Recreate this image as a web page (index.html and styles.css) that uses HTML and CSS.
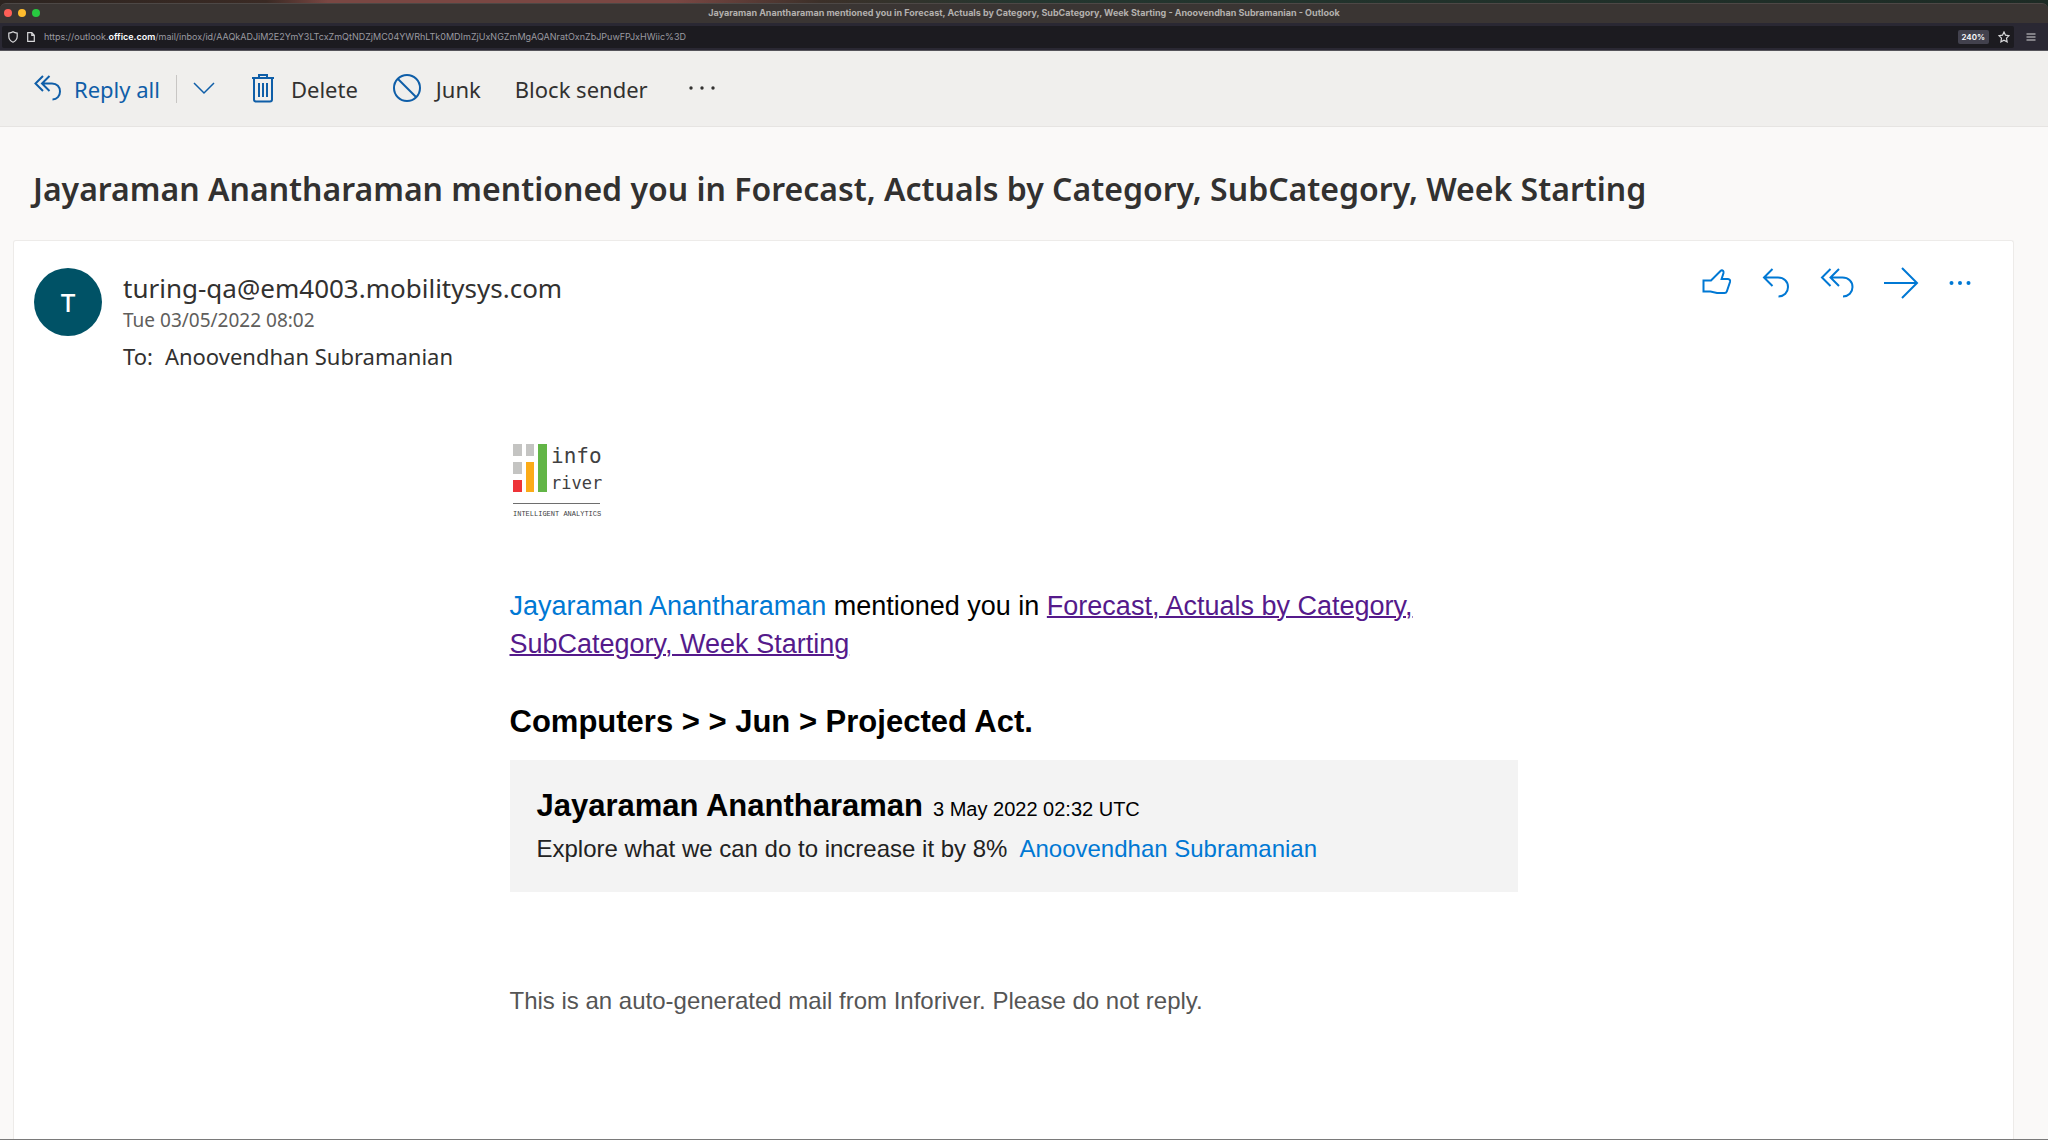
FILE: index.html
```html
<!DOCTYPE html>
<html lang="en">
<head>
    <meta charset="UTF-8">
    <meta name="viewport" content="width=device-width, initial-scale=1.0">
    <title>Jayaraman Anantharaman mentioned you in Forecast - Outlook</title>
    <link rel="stylesheet" href="styles.css">
</head>
<body>

<div class="window">
    <div class="titlebar">
        <div class="lights">
            <button class="light red" aria-label="Close"></button>
            <button class="light yellow" aria-label="Minimize"></button>
            <button class="light green" aria-label="Zoom"></button>
        </div>
        <div class="window-title">Jayaraman Anantharaman mentioned you in Forecast, Actuals by Category, SubCategory, Week Starting - Anoovendhan Subramanian - Outlook</div>
    </div>

    <div class="urlbar">
        <div class="url-field">
            <svg width="10" height="12" viewBox="0 0 10 12"><path d="M5 .8C6.200 1.600 7.600 2 9.200 2.100V5.500C9.200 8.200 7.500 10 5 11.200C2.500 10 .8 8.200 .8 5.500V2.100C2.400 2 3.800 1.600 5 .8Z"/></svg>
            <svg width="8" height="10" viewBox="0 0 8 10"><path d="M.7 .7H4.800L7.300 3.300V9.300H.7ZM4.800 .7V3.300H7.300"/></svg>
            <a class="url" href="#">https://outlook.<b>office.com</b>/mail/inbox/id/AAQkADJiM2E2YmY3LTcxZmQtNDZjMC04YWRhLTk0MDImZjUxNGZmMgAQANratOxnZbJPuwFPJxHWiic%3D</a>
            <button class="zoom-level">240%</button>
            <button class="chrome-btn" aria-label="Bookmark">
                <svg width="12" height="12" viewBox="0 0 12 12"><path d="M6 1L7.500 4.200L11 4.700L8.500 7.100L9.100 10.800L6 9.100L2.900 10.800L3.500 7.100L1 4.700L4.500 4.200Z"/></svg>
            </button>
        </div>
        <button class="chrome-btn" aria-label="Menu">
            <svg width="10" height="10" viewBox="0 0 10 10"><path d="M.5 2H9.500M.5 5H9.500M.5 8H9.500"/></svg>
        </button>
    </div>

    <div class="toolbar">
        <button class="tool primary">
            <svg width="28" height="28" viewBox="0 0 28 28"><path d="M9 1L1.500 8.500L9 16M15.500 1L8 8.500L15.500 16M8 8.500H18C23 8.500 26 12 26 16.500S23 24.500 18.500 24.500"/></svg>
            Reply all
        </button>
        <button class="tool split" aria-label="More reply options">
            <svg width="22" height="16" viewBox="0 0 22 16"><path d="M1 2L11 12L21 2"/></svg>
        </button>
        <button class="tool delete">
            <svg width="24" height="30" viewBox="0 0 24 30"><path d="M1 4H23M8 4V1H16V4M3 4V25.500Q3 27.500 5 27.500H19Q21 27.500 21 25.500V4M8 9V23M12 9V23M16 9V23"/></svg>
            Delete
        </button>
        <button class="tool">
            <svg width="30" height="30" viewBox="0 0 30 30"><circle cx="15" cy="14" r="13"/><path d="M5.500 4.500L24.500 23.500"/></svg>
            Junk
        </button>
        <button class="tool">Block sender</button>
        <button class="tool more" aria-label="More">
            <svg class="dots" width="28" height="8" viewBox="0 0 28 8"><circle cx="3" cy="3" r="1.700"/><circle cx="14" cy="3" r="1.700"/><circle cx="25" cy="3" r="1.700"/></svg>
        </button>
    </div>

    <main class="reading-pane">
        <h1 class="subject">Jayaraman Anantharaman mentioned you in Forecast, Actuals by Category, SubCategory, Week Starting</h1>

        <article class="card">
            <header class="card-header">
                <div class="avatar">T</div>
                <div class="sender">
                    <div class="from">turing-qa@em4003.mobilitysys.com</div>
                    <div class="date">Tue 03/05/2022 08:02</div>
                    <div class="to"><span>To:</span> <span>Anoovendhan Subramanian</span></div>
                </div>
                <div class="actions">
                    <button aria-label="Like">
                        <svg width="30" height="32" viewBox="0 0 30 32"><path d="M1.500 12.500H9L18.500 3Q20 1.500 21 2.800Q21.700 3.500 21.500 5L19.600 11H26Q28.600 11.200 28 14L24.800 23.500Q24.300 25 22.500 25H15L8.500 23.500H1.500Z"/></svg>
                    </button>
                    <button aria-label="Reply">
                        <svg width="28" height="32" viewBox="0 0 28 32"><path d="M10.500 1L2 9.500L10.500 18M2 9.500H16C22 9.500 26 13.500 26 19S22 28.500 16.500 28.500"/></svg>
                    </button>
                    <button aria-label="Reply all">
                        <svg width="34" height="32" viewBox="0 0 34 32"><path d="M10.500 1L2 9.500L10.500 18M19 1L10.500 9.500L19 18M10.500 9.500H22.500C28.500 9.500 32.500 13.500 32.500 19S28.500 28.500 23 28.500"/></svg>
                    </button>
                    <button aria-label="Forward">
                        <svg width="34" height="32" viewBox="0 0 34 32"><path d="M0 15H33M18 0L33 15L18 30"/></svg>
                    </button>
                    <button aria-label="More actions">
                        <svg class="dots" width="24" height="32" viewBox="0 0 24 32"><circle cx="3.500" cy="15" r="2"/><circle cx="12" cy="15" r="2"/><circle cx="20.500" cy="15" r="2"/></svg>
                    </button>
                </div>
            </header>

            <div class="mail">
                <svg class="logo" width="96" height="80" viewBox="0 0 96 80">
                    <g fill="#c4c4c2">
                        <rect x="3" y="4" width="9" height="12"/>
                        <rect x="16" y="4" width="8" height="12"/>
                        <rect x="3" y="22" width="9" height="12"/>
                    </g>
                    <rect x="3" y="40" width="9" height="12" fill="#ee3338"/>
                    <rect x="16" y="22" width="8" height="30" fill="#fbab18"/>
                    <rect x="28" y="4" width="9" height="48" fill="#62b546"/>
                    <text class="logo-info" x="41" y="23">info</text>
                    <text class="logo-river" x="41" y="49">river</text>
                    <path d="M3 63.500H90" stroke="#6e6e6e"/>
                    <text class="logo-tag" x="3" y="76">INTELLIGENT ANALYTICS</text>
                </svg>

                <p class="mention"><span class="person">Jayaraman Anantharaman</span> mentioned you in <a href="#">Forecast, Actuals by Category, SubCategory, Week Starting</a></p>

                <h2 class="cell-path">Computers &gt; &gt; Jun &gt; Projected Act.</h2>

                <div class="comment">
                    <div class="comment-head"><strong>Jayaraman Anantharaman</strong><span>3 May 2022 02:32 UTC</span></div>
                    <div class="comment-text">Explore what we can do to increase it by 8%&nbsp; <span class="person">Anoovendhan Subramanian</span></div>
                </div>

                <p class="note">This is an auto-generated mail from Inforiver. Please do not reply.</p>
            </div>
        </article>
    </main>
</div>

</body>
</html>
```
FILE: styles.css
```css
* {
    box-sizing: border-box;
}
body {
    margin: 0;
    background: linear-gradient(to right, #2c2420 0, #3a2a24 13%, #7a4743 16%, #7a4743 33%, #3c3029 40%, #24362f 50%, #1d2b25 100%);
    font-family: "Noto Sans", "Open Sans", sans-serif;
    color: #323130;
}
button {
    border: none;
    padding: 0;
    background: none;
    font: inherit;
    color: inherit;
    cursor: pointer;
}
svg {
    display: block;
    flex: none;
    fill: none;
}
.window {
    display: flex;
    flex-direction: column;
    min-height: 100vh;
    padding-top: 3px;
    border-bottom: 1px solid #7a7a7a;
}

/* browser chrome */
.titlebar {
    display: grid;
    grid-template-columns: 1fr auto 1fr;
    align-items: center;
    height: 20px;
    padding: 0 2px 2px;
    background: #3a3533;
    border-top: 1px solid #4d4846;
    border-radius: 6px 6px 0 0;
}
.lights {
    display: flex;
    gap: 6px;
    padding-left: 2px;
}
.light {
    width: 8px;
    height: 8px;
    border-radius: 50%;
}
.red {
    background: #ff5f57;
}
.yellow {
    background: #febc2e;
}
.green {
    background: #28c840;
}
.window-title {
    font: bold 9px Inter, sans-serif;
    color: #b3b0ae;
}
.urlbar {
    display: flex;
    align-items: center;
    height: 28px;
    padding: 0 12px 0 2px;
    gap: 12px;
    background: #2a2833;
    border-bottom: 1px solid #55545a;
    font-family: Inter, sans-serif;
}
.url-field {
    display: flex;
    flex: 1;
    align-items: center;
    height: 22px;
    padding: 0 4px 0 6px;
    gap: 9px;
    background: #1c1b20;
    border-radius: 2px;
}
.urlbar svg {
    stroke: #d8d8da;
    stroke-width: 1.2;
}
.url {
    flex: 1;
    font-size: 9px;
    color: #9a9aa0;
    text-decoration: none;
}
.url b {
    font-weight: 600;
    color: #fbfbfe;
}
.zoom-level {
    height: 14px;
    padding: 0 4px;
    border-radius: 2px;
    background: #42414d;
    font-size: 8px;
    font-weight: 600;
    color: #fbfbfe;
}

/* command bar */
.toolbar {
    display: flex;
    align-items: center;
    height: 76px;
    padding: 0 34px;
    gap: 34px;
    background: #f0efed;
    border-bottom: 1px solid #e6e4e2;
    font-size: 22px;
}
.tool {
    display: flex;
    align-items: center;
    gap: 14px;
}
.tool svg {
    stroke: #0f5ea8;
    stroke-width: 2;
}
.primary {
    gap: 12px;
    color: #0f5ea8;
}
.split {
    height: 28px;
    margin-left: -18px;
    padding-left: 16px;
    border-left: 1px solid #c8c6c4;
}
.split svg {
    stroke-width: 1.5;
}
.delete {
    padding-left: 2px;
    gap: 16px;
}
.more {
    padding-left: 6px;
}
.toolbar svg.dots,
.actions svg.dots {
    fill: currentColor;
    stroke: none;
}

/* message */
.reading-pane {
    display: flex;
    flex: 1;
    flex-direction: column;
    padding: 0 34px 0 13px;
    background: #faf9f8;
}
.subject {
    margin: 0;
    padding: 42px 20px 31px;
    font-size: 32px;
    font-weight: 600;
    line-height: 40px;
    color: #323130;
}
.card {
    flex: 1;
    padding: 27px 20px 0;
    background: #fff;
    border: 1px solid #edebe9;
    border-bottom: none;
    border-radius: 3px 3px 0 0;
}
.card-header {
    display: flex;
    gap: 21px;
}
.avatar {
    display: grid;
    place-items: center;
    width: 68px;
    height: 68px;
    border-radius: 50%;
    background: #005266;
    color: #fff;
    font-size: 26px;
    font-weight: 500;
}
.sender {
    flex: 1;
}
.from {
    font-size: 26px;
    line-height: 40px;
}
.date {
    font-size: 19px;
    line-height: 24px;
    color: #605e5c;
}
.to {
    display: flex;
    gap: 12px;
    margin-top: 8px;
    font-size: 22px;
    line-height: 32px;
}
.actions {
    display: flex;
    gap: 30px;
    height: 32px;
    padding-right: 21px;
    color: #0078d4;
}
.actions svg {
    overflow: visible;
    stroke: #0078d4;
    stroke-width: 2;
}

/* mail body */
.mail {
    max-width: 1008px;
    margin: 68px auto 0;
    font-family: "Liberation Sans", Arial, sans-serif;
    color: #000;
}
.logo text {
    font-family: "DejaVu Sans Mono", monospace;
    fill: #414042;
}
.logo .logo-info {
    font-size: 21px;
}
.logo .logo-river {
    font-size: 17px;
}
.logo .logo-tag {
    font-family: "Liberation Mono", monospace;
    font-size: 7px;
}
.person {
    color: #0078d4;
}
.mention {
    margin: 67px 0 0;
    font-size: 27px;
    line-height: 38px;
}
.mention a {
    color: #551a8b;
    text-decoration-thickness: 2px;
}
.cell-path {
    margin: 40px 0 19px;
    font-size: 31px;
    line-height: 38px;
}
.comment {
    padding: 25px 27px 24px;
    background: #f3f3f3;
}
.comment-head {
    display: flex;
    align-items: baseline;
    gap: 10px;
    font-size: 20px;
    line-height: 42px;
}
.comment-head strong {
    font-size: 31px;
}
.comment-text {
    font-size: 24px;
    line-height: 38px;
    color: #222;
}
.comment-text .person {
    color: #0078d4;
}
.note {
    margin: 90px 0 0;
    font-size: 24px;
    line-height: 38px;
    color: #555;
}
```
